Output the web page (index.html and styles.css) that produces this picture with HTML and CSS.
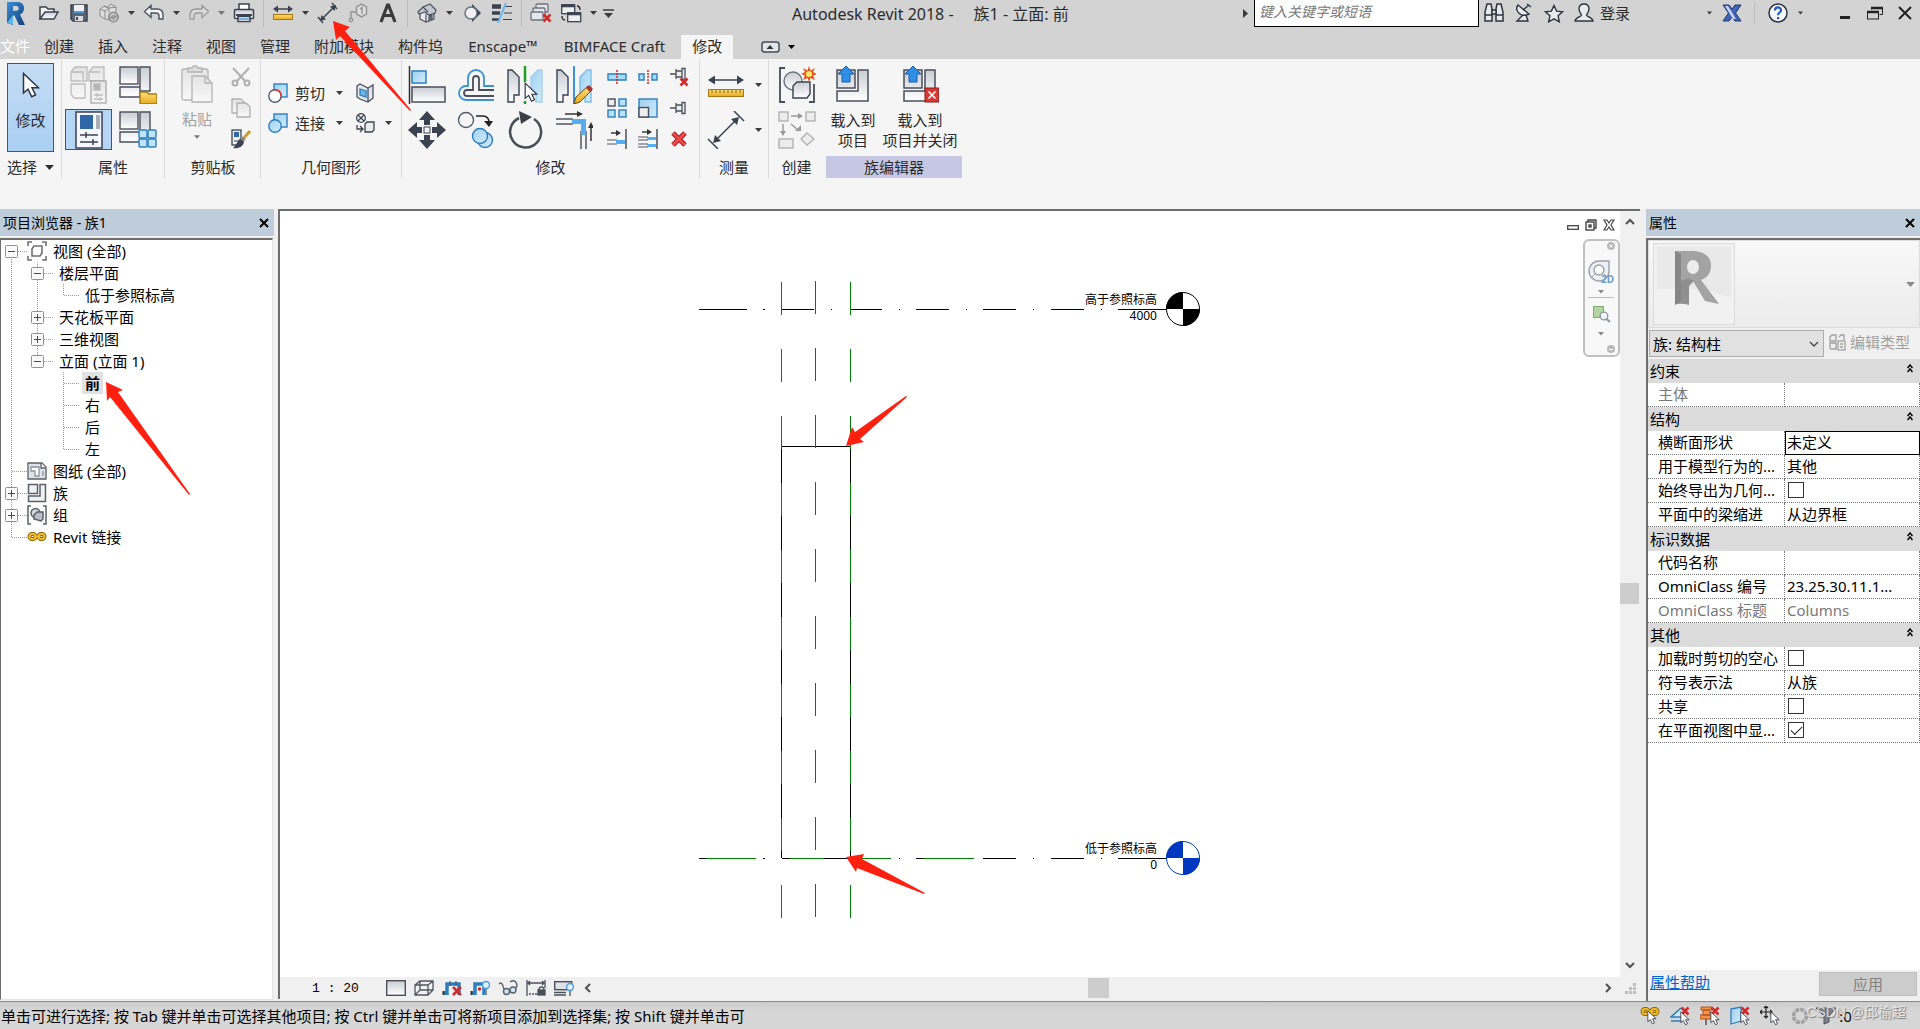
FILE: index.html
```html
<!DOCTYPE html>
<html lang="zh-CN">
<head>
<meta charset="utf-8">
<title>Autodesk Revit 2018 - 族1 - 立面: 前</title>
<link rel="stylesheet" href="styles.css">
</head>
<body>
<svg class="defs" width="0" height="0" aria-hidden="true">
  <defs>
    <linearGradient id="steel" x1="0" y1="0" x2="0" y2="1"><stop offset="0" stop-color="#c9ccd4"/><stop offset="1" stop-color="#ffffff"/></linearGradient>
    <linearGradient id="sky" x1="0" y1="0" x2="1" y2="1"><stop offset="0" stop-color="#9fd0ee"/><stop offset="1" stop-color="#d2ecfb"/></linearGradient>
    <linearGradient id="gold" x1="0" y1="0" x2="0" y2="1"><stop offset="0" stop-color="#ffe07a"/><stop offset="1" stop-color="#e6a91c"/></linearGradient>
    <linearGradient id="logo" x1="0" y1="0" x2="1" y2="1"><stop offset="0" stop-color="#3a8fd8"/><stop offset="1" stop-color="#123f78"/></linearGradient>
    <linearGradient id="pale" x1="0" y1="0" x2="0" y2="1"><stop offset="0" stop-color="#e4e4e4"/><stop offset="1" stop-color="#f8f8f8"/></linearGradient>
    <symbol id="caret" viewBox="0 0 7 4"><path d="M0 0h7L3.500 4z" fill="currentColor"/></symbol>
    <symbol id="cursor" viewBox="0 0 12 18"><path d="M1 1v13l3-2.500 2.500 5 2.500-1.200-2.300-4.800H11z" fill="#fff" stroke="#2d3440" stroke-width="1"/></symbol>
    <symbol id="g-v" viewBox="0 0 26 22"><path d="M10.500 0v22"/></symbol>
    <symbol id="g-t" viewBox="0 0 26 22"><path d="M10.500 0v22M11 11.500h18"/></symbol>
    <symbol id="g-l" viewBox="0 0 26 22"><path d="M10.500 0v11M11 11.500h18"/></symbol>
    <symbol id="g-d" viewBox="0 0 26 22"><path d="M10.500 11v11M11 11.500h15"/></symbol>
    <symbol id="minus" viewBox="0 0 13 13"><rect x=".5" y=".5" width="12" height="12" rx="1" fill="#fafafa" stroke="#919191"/><path d="M3 6.500h7" stroke="#2b4b9b"/></symbol>
    <symbol id="plus" viewBox="0 0 13 13"><rect x=".5" y=".5" width="12" height="12" rx="1" fill="#fafafa" stroke="#919191"/><path d="M3 6.500h7M6.500 3v7" stroke="#2b4b9b"/></symbol>
    <symbol id="chev" viewBox="0 0 6 9"><path d="M.5 4 3 1l2.500 3M.5 8 3 5l2.500 3" fill="none" stroke="#000" stroke-width="1.500"/></symbol>
    <symbol id="x" viewBox="0 0 10 10"><path d="M1 1l8 8M9 1 1 9" stroke="currentColor" stroke-width="2" fill="none"/></symbol>
    <symbol id="redx" viewBox="0 0 10 10"><path d="M1.500 1.500l7 7M8.500 1.500l-7 7" stroke="#d02a2a" stroke-width="2.600" fill="none"/></symbol>
    <symbol id="chain" viewBox="0 0 20 12"><g fill="none" stroke="#8c6508" stroke-width="4"><rect x="2.500" y="3" width="6" height="5" rx="2.500"/><rect x="11.500" y="3" width="6" height="5" rx="2.500"/></g><g fill="none" stroke="#f0bd2a" stroke-width="2"><rect x="2.500" y="3" width="6" height="5" rx="2.500"/><rect x="11.500" y="3" width="6" height="5" rx="2.500"/><path d="M7 5.500h6"/></g></symbol>
  </defs>
</svg>

<header class="top">
  <div class="title-row">
    <div class="qat">
      <button class="logo" aria-label="Revit"><svg width="20" height="24" viewBox="0 0 20 24"><path d="M1 1h10c5 0 7 2.500 7 6.500 0 3-1.500 5-4 6L19 24h-6l-4.500-9.500H7V24l-6-2z" fill="url(#logo)"/><path d="M7 5h3.500c1.500 0 2.200 1 2.200 2.300S12 9.800 10.500 9.800H7z" fill="#d3d3d3"/><path d="M1 22 7 14v9.500z" fill="#57b7e8"/></svg></button>
      <button class="q" aria-label="打开"><svg width="22" height="18" viewBox="0 0 22 18"><path d="M2 15V3h6l2 2h6v3" fill="#f4f4f4" stroke="#3b4250" stroke-width="1.500"/><path d="M2 15 7 8h13l-4 7z" fill="url(#steel)" stroke="#3b4250" stroke-width="1.500"/></svg></button>
      <button class="q" aria-label="保存"><svg width="18" height="18" viewBox="0 0 18 18"><path d="M1 1h16v16H3l-2-2z" fill="#5b6270" stroke="#3b4250" stroke-width="1.500"/><path d="M4 1h10v8H4z" fill="#eef0f3"/><path d="M4 7h10v2H4z" fill="#4d9bd8"/><path d="M5 12h8v5H5z" fill="#d7dade"/><path d="M6 13h2v3H6z" fill="#3b4250"/></svg></button>
      <button class="q" aria-label="同步"><svg width="22" height="20" viewBox="0 0 22 20" stroke="#8b8b8b" fill="#dcdcdc"><path d="M2 6l4-3 3 1.500L13 1l5 3v7l-6 6-5-1-5-3z"/><path d="M2 6l5 2 4-3 7-1M7 8v8M11 5v5M6 3l5 2" fill="none"/><circle cx="15.500" cy="14" r="5" fill="#9c9c9c"/><path d="M12.500 13.500a3 3 0 0 1 5.500-1M18.500 14.500a3 3 0 0 1-5.500 1.500" fill="none" stroke="#e8e8e8"/></svg></button>
      <button class="c" aria-label="同步选项"><svg width="7" height="4"><use href="#caret"/></svg></button>
      <button class="q" aria-label="放弃"><svg width="22" height="18" viewBox="0 0 22 18"><path d="M1.500 7.500 8 1.500V5h6c4 0 6 2.500 6 6v4h-4v-3c0-2-1-3-3-3H8v4.500z" fill="#f3f4f6" stroke="#4a5160" stroke-width="1.400"/></svg></button>
      <button class="c" aria-label="放弃列表"><svg width="7" height="4"><use href="#caret"/></svg></button>
      <button class="q" aria-label="重做"><svg width="22" height="18" viewBox="0 0 22 18"><path d="M20.500 7.500 14 1.500V5H8c-4 0-6 2.500-6 6v4h4v-3c0-2 1-3 3-3h5v4.500z" fill="#dadada" stroke="#9c9c9c" stroke-width="1.400"/></svg></button>
      <button class="c dim" aria-label="重做列表"><svg width="7" height="4"><use href="#caret"/></svg></button>
      <button class="q" aria-label="打印"><svg width="22" height="20" viewBox="0 0 22 20" stroke="#3b4250" stroke-width="1.500"><path d="M6 1h10v6H6z" fill="#fff"/><rect x="1.500" y="6.500" width="19" height="9" rx="1" fill="url(#steel)"/><path d="M3 12h16" stroke-width="2"/><path d="M5 13.500h12v5H5z" fill="#fff"/><path d="M6 16h10" stroke="#4d9bd8"/></svg></button>
      <i class="sep"></i>
      <button class="q" aria-label="测量"><svg width="22" height="18" viewBox="0 0 22 18"><path d="M3 5h16" stroke="#3b4250" stroke-width="1.500"/><path d="M1 5l5-3.500v7zM21 5l-5-3.500v7z" fill="#3b4250"/><rect x="1.500" y="10.500" width="19" height="5" fill="url(#gold)" stroke="#a77912"/></svg></button>
      <button class="c" aria-label="测量选项"><svg width="7" height="4"><use href="#caret"/></svg></button>
      <button class="q" aria-label="对齐尺寸标注"><svg width="22" height="22" viewBox="0 0 22 22"><path d="M6 16 16 6M1 15l5 6M15 1l5 6" stroke="#3b4250" stroke-width="1.500" fill="none"/><path d="M3 19l1.500-6 4.500 4.500zM19 3l-6 1.500 4.500 4.500z" fill="#3b4250"/></svg></button>
      <button class="q" aria-label="按类别标记"><svg width="20" height="20" viewBox="0 0 20 20" fill="none" stroke="#969696" stroke-width="1.500"><path d="M8.500 4 13.500 1l5 3v7l-5 3-5-3z" fill="#dedede"/><path d="M12 6l2-1.500V11M3 15V9h5.500"/><circle cx="3" cy="17" r="1.700"/></svg></button>
      <button class="q" aria-label="文字"><svg width="18" height="20" viewBox="0 0 18 20"><path d="M2 19 8.500 2h1L16 19M5 12.500h8" fill="none" stroke="#3a3a3a" stroke-width="3.200"/></svg></button>
      <i class="sep"></i>
      <button class="q" aria-label="默认三维视图"><svg width="20" height="20" viewBox="0 0 20 20" stroke="#4a5160" stroke-width="1.200"><path d="M3 9v7l6 3 8-3V8" fill="#e7e9ec"/><path d="M1 9 6 4l7-3 6 6-1 3-6 2-4-3-6 2z" fill="#c4c8cf"/><path d="M6 4l5 5" fill="none"/><path d="M9 19v-8M12 18v-5l3-1v5" fill="#6b7280"/></svg></button>
      <button class="c" aria-label="三维视图选项"><svg width="7" height="4"><use href="#caret"/></svg></button>
      <button class="q" aria-label="剖面"><svg width="20" height="20" viewBox="0 0 20 20"><path d="M10 1v18l9-9z" fill="#3b4250"/><circle cx="9" cy="10" r="6" fill="#f0f1f3" stroke="#6b7280" stroke-width="1.500"/></svg></button>
      <button class="q" aria-label="细线"><svg width="22" height="20" viewBox="0 0 22 20" fill="none" stroke="#3b4250"><path d="M1 3.500h9" stroke-width="4.500"/><path d="M1 10h8" stroke-width="3.500"/><path d="M1 16.500h7" stroke-width="2.500"/><path d="M14 3.500h7M13 10h8M12 16.500h9" stroke-width="1"/><path d="M15 0 7 20" stroke="#6bb6ee" stroke-width="2"/></svg></button>
      <i class="sep"></i>
      <button class="q" aria-label="关闭隐藏窗口"><svg width="22" height="20" viewBox="0 0 22 20" fill="#e5e6e9" stroke="#6b7280" stroke-width="1.300"><rect x="6" y="1" width="12" height="8" rx="1"/><rect x="3" y="5" width="12" height="8" rx="1"/><rect x="1" y="9" width="12" height="8" rx="1"/><svg x="12" y="10" width="10" height="10"><use href="#redx"/></svg></svg></button>
      <button class="q" aria-label="切换窗口"><svg width="22" height="20" viewBox="0 0 22 20"><rect x="1.700" y="1.700" width="13" height="9" fill="#eee" stroke="#3b4250" stroke-width="1.300"/><path d="M1 3h14" stroke="#3b4250" stroke-width="2.500"/><rect x="7.700" y="9.700" width="13" height="9" fill="#eee" stroke="#3b4250" stroke-width="1.300"/><path d="M7 11h14" stroke="#3b4250" stroke-width="2.500"/><path d="M17 3c2 0 3 1 3 4M5 17c-2 0-3-1-3-4" fill="none" stroke="#222" stroke-width="1.300"/></svg></button>
      <button class="c" aria-label="窗口列表"><svg width="7" height="4"><use href="#caret"/></svg></button>
      <button class="c" aria-label="自定义快速访问工具栏"><svg width="11" height="9" viewBox="0 0 11 9"><path d="M0 1h11" stroke="#3b3b3b" stroke-width="1.500"/><path d="M1 4h9L5.500 9z" fill="#3b3b3b"/></svg></button>
    </div>
    <h1 class="title"><span>Autodesk Revit 2018 -</span><span>族1 - 立面: 前</span></h1>
    <div class="info">
      <svg class="tri" width="5" height="9" viewBox="0 0 5 9"><path d="M0 0l5 4.500L0 9z" fill="#3b3b3b"/></svg>
      <input class="search" type="text" aria-label="搜索" placeholder="键入关键字或短语">
      <button class="q" aria-label="查找"><svg width="20" height="20" viewBox="0 0 20 20" fill="#e9eaec" stroke="#2d3440" stroke-width="1.500"><path d="M3 1h4l1 5v12H1V9z"/><path d="M17 1h-4l-1 5v12h7V9z"/><path d="M8 7h4v4H8zM1 12h7M12 12h7"/></svg></button>
      <button class="q" aria-label="通讯中心"><svg width="18" height="20" viewBox="0 0 18 20" fill="#e9eaec" stroke="#2d3440" stroke-width="1.400"><path d="M8 12l-6 6h11l-2-6z"/><path d="M3 2c-4 6 3 13 11 9z"/><path d="M8 7l6-5M12 1l4 3"/></svg></button>
      <button class="q" aria-label="收藏夹"><svg width="20" height="19" viewBox="0 0 20 19"><path d="M10 1.500l2.600 5.600 6 .7-4.500 4 1.200 6L10 14.900l-5.300 2.900 1.200-6-4.500-4 6-.7z" fill="#e9eaec" stroke="#2d3440" stroke-width="1.400"/></svg></button>
      <button class="q" aria-label="用户"><svg width="20" height="20" viewBox="0 0 20 20" fill="#e9eaec" stroke="#2d3440" stroke-width="1.400"><path d="M10 1c3 0 5 2 5 5s-1.500 4-2.500 6c0 2 6 2 6.500 6H1c.5-4 6.500-4 6.500-6C6.500 10 5 9 5 6s2-5 5-5z"/></svg></button>
      <button class="login">登录</button>
      <button class="c" aria-label="登录选项"><svg width="5" height="4"><use href="#caret"/></svg></button>
      <button class="q" aria-label="应用商店"><svg width="20" height="18" viewBox="0 0 20 18"><path d="M1 1h6l3 4 3-4h6l-5.500 8 5.500 8h-6l-3-4-3 4H1l5.500-8z" fill="#4264b8" stroke="#20376f"/><path d="M3 2h3l8 13h-3z" fill="#c9d5f0"/></svg></button>
      <i class="sep wide"></i>
      <button class="q" aria-label="帮助"><svg width="20" height="20" viewBox="0 0 20 20"><circle cx="10" cy="10" r="9" fill="#f5f7fb" stroke="#2d3440" stroke-width="1.500"/><path d="M7 7.500c0-4 6-4 6-.3 0 2.300-3 2.300-3 5" fill="none" stroke="#2457b8" stroke-width="2.200"/><rect x="9" y="14" width="2.200" height="2.200" fill="#2457b8"/></svg></button>
      <button class="c" aria-label="帮助选项"><svg width="5" height="4"><use href="#caret"/></svg></button>
      <span class="win">
        <button class="q" aria-label="最小化"><svg width="14" height="14" viewBox="0 0 14 14"><path d="M2 11.500h10" stroke="#222" stroke-width="3"/></svg></button>
        <button class="q" aria-label="还原"><svg width="16" height="14" viewBox="0 0 16 14" fill="none" stroke="#222"><path d="M4.500 3.500v-2h11v7h-3" /><path d="M4 2h12" stroke-width="2.500"/><rect x=".5" y="5.500" width="11" height="7.500"/><path d="M0 6h12" stroke-width="2.500"/></svg></button>
        <button class="q" aria-label="关闭"><svg width="14" height="14" viewBox="0 0 14 14"><path d="M1 1l12 12M13 1 1 13" stroke="#222" stroke-width="2"/></svg></button>
      </span>
    </div>
  </div>
  <nav class="tabs">
    <a class="tab file" href="#">文件</a><a class="tab" href="#">创建</a><a class="tab" href="#">插入</a><a class="tab" href="#">注释</a><a class="tab" href="#">视图</a><a class="tab" href="#">管理</a><a class="tab" href="#">附加模块</a><a class="tab" href="#">构件坞</a><a class="tab addin" href="#">Enscape™</a><a class="tab addin" href="#">BIMFACE Craft</a><a class="tab active" href="#">修改</a>
    <button class="collapse" aria-label="最小化功能区"><svg width="19" height="12" viewBox="0 0 19 12"><rect x="1" y="1" width="17" height="10" rx="2.500" fill="#e4e6ea" stroke="#454c59" stroke-width="1.500"/><path d="M5.500 8h7L9 4z" fill="#333"/></svg><svg width="7" height="4"><use href="#caret"/></svg></button>
  </nav>
</header>

<section class="ribbon">
  <div class="panel p-select">
    <div class="body"><button class="modify"><svg width="18" height="27"><use href="#cursor"/></svg>修改</button></div>
    <div class="cap">选择<svg width="9" height="5"><use href="#caret"/></svg></div>
  </div>
  <div class="panel">
    <div class="body"><div class="big two">
      <button aria-label="类型属性"><svg width="38" height="38" viewBox="0 0 38 38" fill="url(#pale)" stroke="#bcbcbc" stroke-width="1.300"><path d="M1 6l4-5h12v14H1zM19 6l4-5h11v14H19zM1 18h14v14H4l-3-4z"/><path d="M1 6h12v10M19 6h11"/><rect x="21" y="15" width="15" height="22" stroke="#a9a9a9"/><path d="M24 18h6v6h-6z" fill="#b5b5b5"/><path d="M24 29h9M24 33h9M27 27v4M30 31v4"/></svg></button>
      <button aria-label="族类别"><svg width="38" height="38" viewBox="0 0 38 38" fill="url(#steel)" stroke="#4a4f5a" stroke-width="1.400"><rect x="1" y="1" width="18" height="17"/><path d="M21 1h10v24H21zM1 21h20v10H1z"/><path d="M21 26h7l2 2h8v10H21z" fill="url(#gold)" stroke="#a77912"/></svg></button>
      <button class="on" aria-label="属性"><svg width="28" height="38" viewBox="0 0 28 38"><rect x="1" y="1" width="26" height="36" fill="#f5f7fa" stroke="#3b4250" stroke-width="1.500"/><rect x="5" y="4" width="13" height="14" fill="#2f66a6"/><rect x="21" y="4" width="4" height="14" fill="#a9afb9"/><path d="M5 24h18M5 31h18M11 21v6M18 28v6" stroke="#3b4250" stroke-width="1.500"/></svg></button>
      <button aria-label="族类型"><svg width="38" height="38" viewBox="0 0 38 38" fill="url(#steel)" stroke="#4a4f5a" stroke-width="1.400"><rect x="1" y="1" width="18" height="17"/><path d="M21 1h10v24H21zM1 21h20v10H1z"/><g fill="#bfe4fa" stroke="#2c7fbe"><rect x="20" y="19" width="8" height="8" rx="1"/><rect x="29" y="19" width="8" height="8" rx="1"/><rect x="20" y="28" width="8" height="8" rx="1"/><rect x="29" y="28" width="8" height="8" rx="1"/></g></svg></button>
    </div></div>
    <div class="cap">属性</div>
  </div>
  <div class="panel clip">
    <div class="body">
      <button class="paste"><svg width="32" height="38" viewBox="0 0 32 38" fill="url(#pale)" stroke="#b4b4b4" stroke-width="1.300"><rect x="1" y="4" width="26" height="31" rx="2"/><path d="M7 7V3h4c1-3 5-3 6 0h4v4z" fill="#ddd"/><path d="M11 11h13l7 7v19H11z"/><path d="M24 11v7h7" fill="none"/></svg>粘贴<svg class="gc" width="6" height="4"><use href="#caret"/></svg></button>
      <div class="small one">
        <button aria-label="剪切"><svg width="20" height="20" viewBox="0 0 20 20" fill="none" stroke="#b0b0b0" stroke-width="2"><path d="M2 1l12 13M18 1 6 14"/><circle cx="4" cy="16" r="2.500"/><circle cx="16" cy="16" r="2.500"/></svg></button>
        <button aria-label="复制到剪贴板"><svg width="20" height="20" viewBox="0 0 20 20" fill="url(#pale)" stroke="#b0b0b0" stroke-width="1.300"><path d="M1 1h9l3 3v11H1z"/><path d="M6 5h9l4 4v10H6z"/></svg></button>
        <button aria-label="匹配类型属性"><svg width="20" height="20" viewBox="0 0 20 20"><rect x="1" y="1" width="9" height="15" fill="#eef0f3" stroke="#3b4250" stroke-width="1.300"/><path d="M3 3h5v5H3z" fill="#2f66a6"/><path d="M3 12h5" stroke="#3b4250"/><path d="M19 2 11 11" stroke="#c79a3b" stroke-width="3"/><path d="M13 9 10 13" stroke="#888" stroke-width="4"/><path d="M9 10c-3 2-3 6-7 9 5 1 10-1 11-6z" fill="#3b4250"/></svg></button>
      </div>
    </div>
    <div class="cap">剪贴板</div>
  </div>
  <div class="panel">
    <div class="body geo">
      <div class="row">
        <button><svg width="20" height="20" viewBox="0 0 20 20"><rect x="6" y="1" width="13" height="13" fill="url(#sky)" stroke="#2c7fbe" stroke-width="1.400"/><circle cx="7" cy="13" r="6.200" fill="#fff" stroke="#555c68" stroke-width="1.400"/><path d="M6 6.800A6.200 6.200 0 0 1 13.200 14" fill="none" stroke="#e33" stroke-width="1.500"/></svg>剪切</button>
        <button class="c" aria-label="剪切选项"><svg width="7" height="4"><use href="#caret"/></svg></button>
        <button aria-label="填色"><svg width="20" height="20" viewBox="0 0 20 20" stroke="#4a5160" stroke-width="1.300" fill="#e3e6ea"><path d="M2 3l3-2 8 4 5-3v13l-5 4-8-3-3-2z"/><path d="M13 5v14"/><path d="M5 6l6 2v6l-6-2z" fill="#6fb6ea" stroke="#2c7fbe"/></svg></button>
      </div>
      <div class="row">
        <button><svg width="20" height="20" viewBox="0 0 20 20" fill="url(#sky)" stroke="#2c7fbe" stroke-width="1.400"><rect x="6" y="1" width="13" height="13"/><circle cx="7" cy="13" r="6.200"/></svg>连接</button>
        <button class="c" aria-label="连接选项"><svg width="7" height="4"><use href="#caret"/></svg></button>
        <button aria-label="拆分面"><svg width="20" height="20" viewBox="0 0 20 20" stroke="#3b4250" stroke-width="1.300" fill="none"><circle cx="6" cy="5" r="4.300"/><path d="M3 2l6 6M9 2 3 8M2 12v4h5M5 13l3 3-3 3"/><path d="M10 11l2-2h7v8l-2 2h-7z" fill="#e9eaec"/></svg></button>
        <button class="c" aria-label="更多"><svg width="7" height="4"><use href="#caret"/></svg></button>
      </div>
    </div>
    <div class="cap">几何图形</div>
  </div>
  <div class="panel">
    <div class="body">
      <div class="big four">
        <button aria-label="对齐"><svg width="38" height="38" viewBox="0 0 38 38"><path d="M1.500 0v38" stroke="#2d2f33" stroke-width="1.500"/><rect x="4" y="5" width="14" height="12" fill="url(#sky)" stroke="#2c7fbe" stroke-width="1.500"/><rect x="4" y="21" width="33" height="15" fill="url(#steel)" stroke="#4a4f5a" stroke-width="1.500"/></svg></button>
        <button aria-label="偏移"><svg width="38" height="38" viewBox="0 0 38 38" fill="none"><path d="M37 20h-10V12a8 8 0 0 0-16 0v8H9a7 7 0 0 0 0 14h28" stroke="#3d93d2" stroke-width="1.800"/><path d="M37 24H22V13a3 3 0 0 0-6 0v11H10a3 3 0 0 0 0 6h27" stroke="#4a4f5a" stroke-width="1.800"/></svg></button>
        <button aria-label="镜像 - 拾取轴"><svg width="38" height="38" viewBox="0 0 38 38"><path d="M2 4h4l7 7v18H8v7H2z" fill="url(#steel)" stroke="#3b4250" stroke-width="1.400"/><path d="M36 4h-4l-7 7v18h5v7h6z" fill="url(#sky)" stroke="#a4cfe9" stroke-width="1.400"/><path d="M19 0v16M19 35v3" stroke="#23a023" stroke-width="2.500"/><svg x="18" y="16" width="14" height="21"><use href="#cursor"/></svg></svg></button>
        <button aria-label="镜像 - 绘制轴"><svg width="38" height="38" viewBox="0 0 38 38"><path d="M2 4h4l7 7v18H8v7H2z" fill="url(#steel)" stroke="#3b4250" stroke-width="1.400"/><path d="M36 4h-4l-7 7v18h5v7h6z" fill="url(#sky)" stroke="#7fbde6" stroke-width="1.400"/><path d="M19 0v38" stroke="#3d93d2" stroke-width="2"/><path d="M19 38l2-7 12-11 4 4-12 12z" fill="url(#gold)" stroke="#6b4a10"/><path d="M31 22l3-3 4 4-3 3z" fill="#a33" /></svg></button>
        <button aria-label="移动"><svg width="38" height="38" viewBox="0 0 38 38" fill="#3b4250"><path d="M19 0l8 9h-5v5h-6V9h-5zM19 38l8-9h-5v-5h-6v5h-5zM0 19l9-8v5h5v6H9v5zM38 19l-9-8v5h-5v6h5v5z"/><rect x="16" y="16" width="6" height="6" fill="#f5f5f5" stroke="#3b4250"/></svg></button>
        <button aria-label="复制"><svg width="38" height="38" viewBox="0 0 38 38"><circle cx="9" cy="9" r="7.500" fill="#f5f5f5" stroke="#555c68" stroke-width="1.400"/><path d="M19 5h7c4 0 6 2 6 7" fill="none" stroke="#222" stroke-width="1.500"/><path d="M27 10h9l-4 6z" fill="#222"/><g fill="url(#sky)" stroke="#2c7fbe" stroke-width="1.400"><circle cx="28" cy="29" r="7.500"/><circle cx="23" cy="25" r="7.500"/></g></svg></button>
        <button aria-label="旋转"><svg width="38" height="38" viewBox="0 0 38 38"><path d="M13 7A15.500 15.500 0 1 0 28 8" fill="none" stroke="#484c54" stroke-width="2.500"/><path d="M13 0l13 6-11 7z" fill="#3b3f46"/></svg></button>
        <button aria-label="修剪/延伸为角"><svg width="38" height="38" viewBox="0 0 38 38" fill="none"><path d="M10 3h13" stroke="#333" stroke-width="1.500"/><path d="M22 0l6 3-6 3z" fill="#333"/><path d="M1 8h17M1 13h17M26 20v18M31 20v18" stroke="#50555f" stroke-width="1.500"/><path d="M17 10.500h11.500V24" stroke="#56aef0" stroke-width="5"/><path d="M36 30V16" stroke="#333" stroke-width="1.500"/><path d="M33 17l3-6 3 6z" fill="#333"/></svg></button>
      </div>
      <div class="small three">
        <button aria-label="拆分图元"><svg width="20" height="18" viewBox="0 0 20 18"><path d="M1 6h18v6H1z" fill="#a9dcf8" stroke="#2c7fbe" stroke-width="1.400"/><path d="M10 2v14" stroke="#d22" stroke-width="1.500" stroke-dasharray="2 1"/></svg></button>
        <button aria-label="用间隙拆分"><svg width="20" height="18" viewBox="0 0 20 18"><path d="M1 6h5v6H1zM14 6h5v6h-5z" fill="#a9dcf8" stroke="#2c7fbe" stroke-width="1.400"/><path d="M10 2v14" stroke="#d22" stroke-width="1.500" stroke-dasharray="2 1"/></svg></button>
        <button aria-label="解锁"><svg width="20" height="20" viewBox="0 0 20 20"><path d="M1 7h6M7 2v10M7 4h6v6H7M13 1.500h3v11h-3z" fill="#eee" stroke="#4a4f5a" stroke-width="1.300"/><svg x="10" y="10" width="10" height="10"><use href="#redx"/></svg></svg></button>
        <button aria-label="阵列"><svg width="20" height="20" viewBox="0 0 20 20" stroke-width="1.400"><rect x="1" y="1" width="7" height="7" fill="#eee" stroke="#4a4f5a"/><g fill="#b8e2f8" stroke="#2c7fbe"><rect x="12" y="1" width="7" height="7"/><rect x="1" y="12" width="7" height="7"/><rect x="12" y="12" width="7" height="7"/></g></svg></button>
        <button aria-label="缩放"><svg width="20" height="20" viewBox="0 0 20 20" stroke-width="1.400"><rect x="1" y="1" width="18" height="18" fill="url(#sky)" stroke="#2c7fbe"/><rect x="1" y="9.500" width="9.500" height="9.500" fill="#eee" stroke="#4a4f5a"/></svg></button>
        <button aria-label="锁定"><svg width="20" height="16" viewBox="0 0 20 16"><path d="M1 8h6M7 3v10M7 5h6v6H7M13 2.500h3v11h-3z" fill="#eee" stroke="#4a4f5a" stroke-width="1.300"/></svg></button>
        <button aria-label="修剪/延伸单个图元"><svg width="20" height="20" viewBox="0 0 20 20"><path d="M19 0v20" stroke="#4a4f5a" stroke-width="1.500"/><path d="M4 4h6" stroke="#333" stroke-width="1.400"/><path d="M9 1l5 3-5 3z" fill="#333"/><path d="M0 11h10M0 15h10" stroke="#50555f"/><path d="M9 13h9" stroke="#56aef0" stroke-width="4"/></svg></button>
        <button aria-label="修剪/延伸多个图元"><svg width="20" height="20" viewBox="0 0 20 20"><path d="M19 0v20" stroke="#4a4f5a" stroke-width="1.500"/><path d="M4 3h6" stroke="#333" stroke-width="1.400"/><path d="M9 0l5 3-5 3z" fill="#333"/><path d="M0 8h10M0 11h10M0 15h10M0 18h10" stroke="#50555f"/><path d="M9 9.500h9M9 16.500h9" stroke="#56aef0" stroke-width="3"/></svg></button>
        <button aria-label="删除"><svg width="18" height="18" viewBox="0 0 18 18"><path d="M3 3l12 12M15 3 3 15" stroke="#a61e1e" stroke-width="5"/><path d="M3 3l12 12M15 3 3 15" stroke="#ef4b4b" stroke-width="3"/></svg></button>
      </div>
    </div>
    <div class="cap">修改</div>
  </div>
  <div class="panel">
    <div class="body"><div class="big pair">
      <button aria-label="测量两个参照"><svg width="38" height="38" viewBox="0 0 38 38"><path d="M5 14h28" stroke="#3b4250" stroke-width="1.500"/><path d="M1 14l7-4.500v9zM37 14l-7-4.500v9z" fill="#3b4250"/><rect x="1.500" y="23.500" width="35" height="7" fill="url(#gold)" stroke="#a77912"/><path d="M5 24v3M9 24v3M13 24v3M17 24v3M21 24v3M25 24v3M29 24v3M33 24v3" stroke="#8a6410"/></svg></button>
      <button class="c" aria-label="测量选项"><svg width="7" height="4"><use href="#caret"/></svg></button>
      <button aria-label="尺寸标注"><svg width="38" height="38" viewBox="0 0 38 38"><path d="M8 30 30 8M1 28l10 10M27 0l10 10" stroke="#3b4250" stroke-width="1.500"/><path d="M6 32l2-8 6 6zM32 6l-8 2 6 6z" fill="#3b4250"/></svg></button>
      <button class="c" aria-label="尺寸标注选项"><svg width="7" height="4"><use href="#caret"/></svg></button>
    </div></div>
    <div class="cap">测量</div>
  </div>
  <div class="panel last create">
    <div class="body"><div class="big">
      <button aria-label="创建组"><svg width="38" height="38" viewBox="0 0 38 38"><path d="M7 2H2v34h5M31 36h5V18" fill="none" stroke="#4a4f5a" stroke-width="1.800"/><circle cx="15" cy="15" r="9" fill="url(#steel)" stroke="#6b7280" stroke-width="1.400"/><path d="M15 20l4-4h13v12l-3 4H15z" fill="url(#steel)" stroke="#3b4250" stroke-width="1.400"/><path d="M31 0l1.500 4.500L37 2l-2 4 4 2-4 1.500 2 4.500-4.500-2L31 16l-1.500-4L25 14l2-4.500L23 8l4-2-2-4 4.500 2.500z" fill="#e2541b"/><circle cx="31" cy="8" r="3" fill="#ffe86b"/></svg></button>
      <button aria-label="创建类似实例"><svg width="38" height="38" viewBox="0 0 38 38" fill="#ececec" stroke="#b3b3b3" stroke-width="1.400"><rect x="1" y="1" width="9" height="9"/><rect x="28" y="1" width="9" height="9"/><rect x="1" y="28" width="14" height="9"/><path d="M29 22l7 6-7 6-6-6z"/><path d="M13 5h8M5 13v8M13 13l8 7" stroke="#999"/><path d="M20 2l5 3-5 3zM2 20l3 5 3-5zM17 20h6v-6z" fill="#999" stroke="none"/></svg></button>
    </div></div>
    <div class="cap">创建</div>
  </div>
  <div class="panel last editor">
    <div class="body">
      <button class="load"><svg width="38" height="38" viewBox="0 0 38 38"><path d="M3 5h18v18H3zM24 5h10v31H3V26h21z" fill="url(#steel)" stroke="#4a4f5a" stroke-width="1.500"/><path d="M12 1l8 8h-4v8H8V9H4z" fill="#2f8fe6" stroke="#1b5fa8"/></svg><span>载入到</span><span>项目</span></button>
      <button class="load wide"><svg width="38" height="38" viewBox="0 0 38 38"><path d="M3 5h18v18H3zM24 5h10v31H3V26h21z" fill="url(#steel)" stroke="#4a4f5a" stroke-width="1.500"/><path d="M12 1l8 8h-4v8H8V9H4z" fill="#2f8fe6" stroke="#1b5fa8"/><rect x="24" y="23" width="14" height="14" fill="#d53a34" stroke="#8f1a16"/><path d="M27.500 26.500l7 7M34.500 26.500l-7 7" stroke="#fff" stroke-width="1.600"/></svg><span>载入到</span><span>项目并关闭</span></button>
    </div>
    <div class="cap">族编辑器</div>
  </div>
</section>

<main class="work">
  <aside class="browser">
    <div class="dock-title"><span>项目浏览器 - 族1</span><button aria-label="关闭"><svg width="10" height="10"><use href="#x"/></svg></button></div>
    <ul class="tree">
      <li><span class="g"><svg><use href="#g-d"/></svg><button aria-label="折叠"><svg><use href="#minus"/></svg></button></span><svg class="ti" viewBox="0 0 20 20" fill="none" stroke="#6d7077" stroke-width="1.600"><path d="M5 1H1v4M15 1h4v4M5 19H1v-4M15 19h4v-4"/><path d="M5 8l2-3h8v7l-2 3H5z" fill="#fff"/></svg><span class="t">视图 (全部)</span></li>
      <li><span class="g"><svg><use href="#g-v"/></svg></span><span class="g"><svg><use href="#g-t"/></svg><button aria-label="折叠"><svg><use href="#minus"/></svg></button></span><span class="t in">楼层平面</span></li>
      <li><span class="g"><svg><use href="#g-v"/></svg></span><span class="g"><svg><use href="#g-v"/></svg></span><span class="g"><svg><use href="#g-l"/></svg></span><span class="t in">低于参照标高</span></li>
      <li><span class="g"><svg><use href="#g-v"/></svg></span><span class="g"><svg><use href="#g-t"/></svg><button aria-label="展开"><svg><use href="#plus"/></svg></button></span><span class="t in">天花板平面</span></li>
      <li><span class="g"><svg><use href="#g-v"/></svg></span><span class="g"><svg><use href="#g-t"/></svg><button aria-label="展开"><svg><use href="#plus"/></svg></button></span><span class="t in">三维视图</span></li>
      <li><span class="g"><svg><use href="#g-v"/></svg></span><span class="g"><svg><use href="#g-l"/></svg><button aria-label="折叠"><svg><use href="#minus"/></svg></button></span><span class="t in">立面 (立面 1)</span></li>
      <li><span class="g"><svg><use href="#g-v"/></svg></span><span class="g"></span><span class="g"><svg><use href="#g-t"/></svg></span><span class="t in cur">前</span></li>
      <li><span class="g"><svg><use href="#g-v"/></svg></span><span class="g"></span><span class="g"><svg><use href="#g-t"/></svg></span><span class="t in">右</span></li>
      <li><span class="g"><svg><use href="#g-v"/></svg></span><span class="g"></span><span class="g"><svg><use href="#g-t"/></svg></span><span class="t in">后</span></li>
      <li><span class="g"><svg><use href="#g-v"/></svg></span><span class="g"></span><span class="g"><svg><use href="#g-l"/></svg></span><span class="t in">左</span></li>
      <li><span class="g"><svg><use href="#g-t"/></svg></span><svg class="ti" viewBox="0 0 20 20" fill="#dfe2e6" stroke="#5a6068" stroke-width="1.300"><path d="M1 2h14l4 4v12H1z"/><path d="M14 2v5h5" fill="#fff"/><path d="M4 6h8v9H8v-5H4zM16 10v5" fill="#fff" stroke="#8a94a0"/></svg><span class="t">图纸 (全部)</span></li>
      <li><span class="g"><svg><use href="#g-t"/></svg><button aria-label="展开"><svg><use href="#plus"/></svg></button></span><svg class="ti" viewBox="0 0 20 20" fill="#f0f1f3" stroke="#5a6068" stroke-width="1.500"><rect x="1.500" y="1.500" width="9" height="9"/><path d="M13 1.500h5.500v17h-17V13H13z"/></svg><span class="t">族</span></li>
      <li><span class="g"><svg><use href="#g-t"/></svg><button aria-label="展开"><svg><use href="#plus"/></svg></button></span><svg class="ti" viewBox="0 0 20 20" fill="none" stroke="#5a6068" stroke-width="1.500"><path d="M4 1H1v18h3M16 1h3v18h-3"/><circle cx="8.500" cy="8" r="4.500" fill="#d5d9df"/><path d="M7 10l3-3h6v7l-2 2-7-2z" fill="#b9bec7"/></svg><span class="t">组</span></li>
      <li><span class="g"><svg><use href="#g-l"/></svg></span><svg class="ti" viewBox="0 -4 20 20"><use href="#chain" width="20" height="12"/></svg><span class="t">Revit 链接</span></li>
    </ul>
  </aside>

  <section class="view">
    <div class="canvas">
      <svg class="drawing" role="img" aria-label="立面: 前">
        <g transform="translate(-280 -211)" shape-rendering="crispEdges" fill="none" stroke-width="1">
          <g stroke="#000">
            <path d="M699 309.500h48M763 309.500h2M782 309.500h32M831 309.500h1M850 309.500h32M899 309.500h1M916 309.500h33M966 309.500h1M983 309.500h33M1033 309.500h1M1051 309.500h33M1101 309.500h1M1118 309.500h48"/>
            <path d="M781.500 858V446.500h69V858.500h-69"/>
            <path d="M699 858.500h7M763 858.500h2M899 858.500h1M916 858.500h8M983 858.500h33M1033 858.500h1M1051 858.500h33M1101 858.500h1M1118 858.500h48"/>
          </g>
          <g stroke="#008000">
            <path d="M781.500 282V919M850.500 282V919" stroke-dasharray="33 34"/>
            <path d="M815.500 281V918" stroke-dasharray="33 34"/>
            <path d="M706 858.500h50M790 858.500h34M862 858.500h29M924 858.500h50"/>
          </g>
          <g shape-rendering="auto">
            <circle cx="1183" cy="309" r="16.500" fill="#fff" stroke="#000"/>
            <path d="M1183 309v-17a17 17 0 0 0-17 17zM1183 309v17a17 17 0 0 0 17-17z" fill="#000"/>
            <circle cx="1183" cy="858" r="16.500" fill="#fff" stroke="#0038c0"/>
            <path d="M1183 858v-17a17 17 0 0 0-17 17zM1183 858v17a17 17 0 0 0 17-17z" fill="#0038c0"/>
            <path d="M846 446l18-4-4-3 47-42-1-1-51 36-3-5z" fill="#ff2010"/>
            <path d="M846 857l18-3-2 5 63 34-1 1-67-26-1 4z" fill="#ff2010"/>
          </g>
          <g class="level" text-anchor="end">
            <text x="1157" y="304">高于参照标高</text><text x="1157" y="320">4000</text>
            <text x="1157" y="853">低于参照标高</text><text x="1157" y="869">0</text>
          </g>
        </g>
      </svg>
      <div class="overlay">
        <div class="mdi">
          <button aria-label="最小化"><svg width="12" height="12" viewBox="0 0 12 12"><rect x=".7" y="6.700" width="10.600" height="3.600" fill="#fff" stroke="#444" stroke-width="1.300"/></svg></button>
          <button aria-label="还原"><svg width="12" height="12" viewBox="0 0 12 12" fill="none" stroke="#444" stroke-width="1.400"><path d="M3 3V1h8v8H9"/><rect x="1" y="3" width="8" height="8"/><rect x="4" y="6" width="2" height="2"/></svg></button>
          <button aria-label="关闭"><svg width="12" height="12" viewBox="0 0 12 12" fill="#fff" stroke="#444" stroke-width="1.200"><path d="M1 1h3l2 3 2-3h3L8 6l3 5H8L6 8l-2 3H1l3-5z"/></svg></button>
        </div>
        <div class="navbar">
          <svg width="33" height="114" viewBox="0 0 33 114">
            <circle cx="26" cy="5" r="4" fill="#b9b9b9"/><path d="M24.500 3.500l3 3M27.500 3.500l-3 3" stroke="#fff"/>
            <path d="M14 20h10v10a10 10 0 1 1-10-10z" fill="#eef0f4" stroke="#9aa1ad" stroke-width="1.400"/><circle cx="14" cy="29" r="5" fill="#fff" stroke="#9aa1ad" stroke-width="1.400"/><path d="M6 37l4-4M19 33l3 3" stroke="#9aa1ad"/>
            <text x="16" y="42" class="nav2d">2D</text>
            <path d="M13 49h6l-3 3.500z" fill="#888"/><path d="M3 56.500h26" stroke="#bbb"/>
            <rect x="8.500" y="65.500" width="10" height="11" fill="#b5d5a5" stroke="#7eae6c"/><circle cx="19" cy="75" r="3.800" fill="#eef4f8" stroke="#8b949e" stroke-width="1.300"/><path d="M21.500 78l3.500 3" stroke="#8b949e" stroke-width="2"/>
            <path d="M13 91h6l-3 3.500z" fill="#888"/>
            <circle cx="26" cy="108" r="4" fill="#b9b9b9"/><path d="M24 108.500h4" stroke="#fff"/>
          </svg>
        </div>
      </div>
    </div>
    <div class="vscroll"><svg width="10" height="7" viewBox="0 0 10 7"><path d="M1 6l4-4 4 4" fill="none" stroke="#505050" stroke-width="2"/></svg><i></i><svg width="10" height="7" viewBox="0 0 10 7"><path d="M1 1l4 4 4-4" fill="none" stroke="#505050" stroke-width="2"/></svg></div>
    <div class="viewbar">
      <button class="scale">1 : 20</button>
      <button aria-label="详细程度"><svg width="20" height="16" viewBox="0 0 20 16"><rect x=".7" y=".7" width="18.600" height="14.600" fill="url(#steel)" stroke="#4a4f5a" stroke-width="1.400"/></svg></button>
      <button aria-label="视觉样式"><svg width="20" height="16" viewBox="0 0 20 16" fill="none" stroke="#50555f" stroke-width="1.300"><path d="M1 5h13v10H1zM1 5l5-4h13v9l-5 5M14 5l5-4M6 1v9h13M6 10l-5 5"/></svg></button>
      <button aria-label="裁剪视图"><svg width="20" height="16" viewBox="0 0 20 16"><path d="M5 15V4h12v11M1 13h5" fill="none" stroke="#2c7fbe" stroke-width="3.500"/><path d="M1.500 15v-4" stroke="#333" stroke-width="2"/><path d="M8 1v5M14 1v5" stroke="#4a4f5a"/><path d="M11 7l8 8M19 7l-8 8" stroke="#d02a2a" stroke-width="2.500"/></svg></button>
      <button aria-label="显示裁剪区域"><svg width="20" height="16" viewBox="0 0 20 16"><path d="M5 15V4h9v11M1 13h5" fill="none" stroke="#2c7fbe" stroke-width="3.500"/><path d="M1.500 15v-4" stroke="#333" stroke-width="2"/><circle cx="9.500" cy="9" r="1.800" fill="#d22"/><circle cx="16" cy="5" r="3.500" fill="#dff1fc" stroke="#4c9edc" stroke-width="1.400"/><path d="M16 9v6" stroke="#888" stroke-width="2"/></svg></button>
      <button aria-label="临时隐藏/隔离"><svg width="20" height="16" viewBox="0 0 20 16" fill="#cfe6f4" stroke="#59616d" stroke-width="1.400"><path d="M1 4c3-3 4 2 5 5M12 2c4-3 7 0 7 4l-2 3" fill="none"/><ellipse cx="8.500" cy="11.500" rx="3" ry="3"/><ellipse cx="15" cy="10" rx="3" ry="3"/></svg></button>
      <button aria-label="显示约束"><svg width="20" height="16" viewBox="0 0 20 16" fill="none" stroke="#4a4f5a" stroke-width="1.300"><path d="M1 0v16M19 0v8M2 3h16M4 1 2 3l2 2M16 1l2 2-2 2"/><path d="M3 14h8" stroke-dasharray="2 1"/><path d="M13 10c0-4 5-4 5 0"/><rect x="12" y="10" width="7" height="5" fill="#4a4f5a"/></svg></button>
      <button aria-label="预览可见性"><svg width="20" height="16" viewBox="0 0 20 16"><rect x=".7" y="1.700" width="17" height="8" fill="#dfe2e6" stroke="#4a4f5a" stroke-width="1.400"/><path d="M0 12.500h12M0 15h12" stroke="#4a4f5a" stroke-width="1.300"/><circle cx="16" cy="7" r="3.500" fill="#dff1fc" stroke="#4c9edc" stroke-width="1.400"/><path d="M16 11v5" stroke="#888" stroke-width="2"/></svg></button>
      <div class="hscroll"><svg width="7" height="10" viewBox="0 0 7 10"><path d="M6 1 2 5l4 4" fill="none" stroke="#505050" stroke-width="2"/></svg><i></i><svg width="7" height="10" viewBox="0 0 7 10"><path d="M1 1l4 4-4 4" fill="none" stroke="#505050" stroke-width="2"/></svg></div>
    </div>
    <div class="grip"><svg width="12" height="12" viewBox="0 0 12 12" fill="#bdbdbd"><path d="M8 0h3v3H8zM4 4h3v3H4zM8 4h3v3H8zM0 8h3v3H0zM4 8h3v3H4zM8 8h3v3H8z"/></svg></div>
  </section>

  <aside class="props">
    <div class="dock-title"><span>属性</span><button aria-label="关闭"><svg width="10" height="10"><use href="#x"/></svg></button></div>
    <div class="props-box">
      <div class="type">
        <div class="thumb"><svg width="74" height="74" viewBox="0 0 74 74"><path d="M0 0h74v50L40 42H0z" fill="#e9e9e9"/><path d="M18 4h16c14 0 20 6 20 15 0 7-4 12-10 14l18 24-14-3-12-20-4 3v20h-14z" fill="#a3a3a3"/><path d="M18 4l6 3v48l-6 3z" fill="#868686"/><path d="M24 34l8-3 5 3-5 5v19l-8-2z" fill="#8f8f8f"/><ellipse cx="36" cy="20" rx="6" ry="7" fill="#ececec"/></svg></div>
        <svg width="9" height="5" class="tc"><use href="#caret"/></svg>
      </div>
      <div class="filter">
        <label class="combo"><select aria-label="族类型"><option>族: 结构柱</option></select><svg width="10" height="6" viewBox="0 0 10 6"><path d="M1 1l4 4 4-4" fill="none" stroke="#444" stroke-width="1.300"/></svg></label>
        <button class="edit" disabled><svg width="17" height="17" viewBox="0 0 17 17" fill="none" stroke="#a0a0a0" stroke-width="1.300"><path d="M1 3l2-2h4v6H1zM10 3l2-2h3v5M1 9h6v6H2l-1-1z"/><rect x="9" y="7" width="7" height="9"/><path d="M11 10h3M11 13h3"/></svg>编辑类型</button>
      </div>
      <table class="grid">
        <colgroup><col class="k"><col></colgroup>
        <tbody>
          <tr class="grp"><th colspan="2"><span>约束<svg width="6" height="9"><use href="#chev"/></svg></span></th></tr>
          <tr class="ro"><td>主体</td><td></td></tr>
          <tr class="grp"><th colspan="2"><span>结构<svg width="6" height="9"><use href="#chev"/></svg></span></th></tr>
          <tr><td>横断面形状</td><td class="focus">未定义</td></tr>
          <tr><td>用于模型行为的...</td><td>其他</td></tr>
          <tr><td><label for="c1">始终导出为几何...</label></td><td><input id="c1" type="checkbox"></td></tr>
          <tr><td>平面中的梁缩进</td><td>从边界框</td></tr>
          <tr class="grp"><th colspan="2"><span>标识数据<svg width="6" height="9"><use href="#chev"/></svg></span></th></tr>
          <tr><td>代码名称</td><td></td></tr>
          <tr><td>OmniClass 编号</td><td>23.25.30.11.1...</td></tr>
          <tr class="ro"><td>OmniClass 标题</td><td>Columns</td></tr>
          <tr class="grp"><th colspan="2"><span>其他<svg width="6" height="9"><use href="#chev"/></svg></span></th></tr>
          <tr><td><label for="c2">加载时剪切的空心</label></td><td><input id="c2" type="checkbox"></td></tr>
          <tr><td>符号表示法</td><td>从族</td></tr>
          <tr><td><label for="c3">共享</label></td><td><input id="c3" type="checkbox"></td></tr>
          <tr><td><label for="c4">在平面视图中显...</label></td><td><input id="c4" type="checkbox" checked></td></tr>
        </tbody>
      </table>
      <div class="foot"><a href="#">属性帮助</a><button disabled>应用</button></div>
    </div>
  </aside>
</main>

<footer class="status">
  <p>单击可进行选择; 按 Tab 键并单击可选择其他项目; 按 Ctrl 键并单击可将新项目添加到选择集; 按 Shift 键并单击可</p>
  <div class="tools">
    <button aria-label="选择链接"><svg width="20" height="20" viewBox="0 0 20 20"><use href="#chain" width="20" height="12"/><svg x="7" y="4" width="10" height="15"><use href="#cursor"/></svg></svg></button>
    <button aria-label="选择基线图元"><svg width="20" height="20" viewBox="0 0 20 20"><path d="M11 2 1 11h10M1 15h11" fill="#cfe8f8" stroke="#2c7fbe" stroke-width="1.600"/><svg x="10" y="0" width="10" height="10"><use href="#redx"/></svg><svg x="10" y="5" width="10" height="15"><use href="#cursor"/></svg></svg></button>
    <button aria-label="选择锁定图元"><svg width="20" height="20" viewBox="0 0 20 20"><path d="M1 1h11v3H1zM3 4h7v5H3zM0 9h12v4H0z" fill="#f0934a" stroke="#b4501c"/><path d="M6 13v6" stroke="#555" stroke-width="1.500"/><svg x="10" y="0" width="10" height="10"><use href="#redx"/></svg><svg x="10" y="5" width="10" height="15"><use href="#cursor"/></svg></svg></button>
    <button aria-label="按面选择"><svg width="20" height="20" viewBox="0 0 20 20"><path d="M1 3l10-2v14L1 18z" fill="url(#sky)" stroke="#2c7fbe" stroke-width="1.300"/><svg x="10" y="0" width="10" height="10"><use href="#redx"/></svg><svg x="10" y="5" width="10" height="15"><use href="#cursor"/></svg></svg></button>
    <button aria-label="选择时拖曳"><svg width="20" height="20" viewBox="0 0 20 20"><path d="M0 6h12M6 0v12M4 2l2-2 2 2M4 10l2 2 2-2M2 4 0 6l2 2M10 4l2 2-2 2" fill="none" stroke="#222" stroke-width="1.200"/><svg x="10" y="5" width="10" height="15"><use href="#cursor"/></svg></svg></button>
    <button aria-label="后台进程"><svg width="20" height="20" viewBox="0 0 20 20"><circle cx="10" cy="10" r="6.500" fill="none" stroke="#a2a2a2" stroke-width="3.500" stroke-dasharray="4 1"/></svg></button>
    <button class="count"><svg width="22" height="18" viewBox="0 0 22 18"><path d="M1 1h20l-7 8v6l-5 2V9z" fill="#7b828d" stroke="#4a505a"/></svg>:0</button>
    <span class="mark">CSDN @邱榆超</span>
  </div>
</footer>

<svg class="notes" aria-hidden="true" fill="#ff2010"><path d="M333 21l17 6-5 4 66 79-1 1-70-75-4 4z"/><path d="M106 382l17 8-5 2 72 102-1 1-79-98-3 4z"/></svg>
</body>
</html>
```
FILE: styles.css
```css
* { box-sizing: border-box; }
html, body { margin: 0; }
body {
  display: flex;
  flex-direction: column;
  height: 100vh;
  overflow: hidden;
  background: #f5f5f5;
  color: #2b2b2b;
  font: 15px/22px "Noto Sans", "Noto Sans CJK SC", sans-serif;
}
button { padding: 0; border: 0; background: none; color: inherit; font: inherit; display: flex; align-items: center; justify-content: center; }
svg { flex: none; display: block; }
.defs { position: absolute; }

/* title bar */
.top { background: #d3d3d3; }
.title-row { display: flex; align-items: flex-start; height: 35px; }
.qat { display: flex; align-items: center; height: 26px; }
.logo { width: 34px; padding-right: 2px; }
.q { width: 30px; height: 26px; }
.c { width: 15px; height: 26px; color: #3b3b3b; }
.c.dim { color: #777; }
.sep { width: 1px; height: 27px; margin: 0 4px; background: #bcbcbc; }
.sep.wide { margin: 0 8px 0 7px; height: 22px; }
.title { display: flex; gap: 20px; margin: 3px 0 0 176px; font-size: 16px; font-weight: 400; line-height: 22px; white-space: nowrap; }
.info { display: flex; align-items: center; height: 26px; margin-left: auto; }
.tri { margin-right: 6px; }
.search { width: 225px; height: 27px; padding: 0 4px 3px; border: 1px solid #000; border-top: 0; background: #fff; font: italic 14px/20px "Noto Sans", "Noto Sans CJK SC", sans-serif; outline: 0; }
.search::placeholder { color: #777; opacity: 1; }
.login { width: 103px; justify-content: flex-start; padding-left: 1px; }
.win { display: flex; margin-left: 22px; }

.tabs { display: flex; align-items: stretch; height: 24px; }
.tab { padding: 0 12px; color: #2b2b2b; text-decoration: none; line-height: 22px; white-space: nowrap; }
.tab.addin { padding: 0 13px; }
.tab.file { padding: 0 2px 0 0; color: #fff; }
.tab.active { padding: 0 11px; margin-left: 3px; background: #f5f5f5; }
.collapse { gap: 8px; margin-left: 28px; color: #000; }

/* ribbon */
.ribbon { display: flex; padding-top: 1px; height: 150px; flex: none; }
.panel { display: flex; flex-direction: column; height: 118px; border-right: 1px solid #d9d9d9; }
.panel.last { border-right: 0; }
.body { display: flex; height: 96px; }
.cap { display: flex; align-items: center; justify-content: center; height: 22px; white-space: nowrap; }
.p-select .cap { gap: 8px; }
.modify { flex-direction: column; gap: 10px; width: 47px; height: 89px; margin: 3px 7px 0; padding-bottom: 12px; border: 1px solid #0a63b8; background: linear-gradient(#c4dcf4, #aacff2); }
.big { display: grid; grid-template-columns: 47px; grid-auto-rows: 41px; gap: 4px 2px; padding: 4px 2px 0 2px; align-content: start; }
.big.two { grid-template-columns: 47px 47px; padding: 4px 3px 0; }
.big.four { grid-template-columns: repeat(4, 47px); padding-left: 1px; }
.big.pair { grid-template-columns: 47px 16px; gap: 4px 1px; }
.big .c { width: 16px; height: 41px; }
.on { border: 1px solid #0a63b8; background: #b5d5f4; }
.small { display: grid; grid-auto-rows: 31px; padding-top: 1px; align-content: start; }
.small.one { grid-template-columns: 30px; margin-right: 4px; }
.small.three { grid-template-columns: repeat(3, 31px); padding-left: 2px; padding-right: 5px; }
.clip { padding-left: 1px; }
.paste { flex-direction: column; justify-content: flex-start; width: 60px; padding: 5px 0 0 2px; color: #a3a3a3; gap: 5px; }
.paste .gc { color: #777; }
.geo { flex-direction: column; padding: 18px 5px 0 7px; }
.row { display: flex; align-items: center; height: 30px; }
.row button { gap: 7px; height: 30px; }
.row .c { width: 16px; margin: 0 8px 0 6px; }
.row .c:last-child { width: 16px; margin: 0 0 0 5px; }
.load { flex-direction: column; justify-content: flex-start; width: 54px; padding: 5px 0 0; line-height: 20px; }
.load svg { margin-bottom: 7px; }
.load.wide { width: 80px; }
.create { padding-left: 2px; }
.editor { margin-left: 4px; }
.editor .cap { width: 136px; background: #c6c7e3; }

/* work area */
.work { display: flex; flex: 1; min-height: 0; background: #f0f0f0; color: #000; }
.dock-title { display: flex; align-items: center; justify-content: space-between; height: 27px; padding: 0 5px 0 3px; background: #bfcddb; font-size: 14px; flex: none; }
.browser { display: flex; flex-direction: column; width: 274px; padding-bottom: 1px; }
.tree { flex: 1; margin: 2px 1px 0 0; padding: 0; list-style: none; background: #fff; border: 1px solid #e3e3e3; border-top: 2px solid #6d6d6d; border-left-color: #6d6d6d; }
.tree li { display: flex; align-items: center; height: 22px; white-space: nowrap; }
.g { display: grid; width: 26px; height: 22px; align-items: center; }
.g > * { grid-area: 1 / 1; }
.g > svg { width: 26px; height: 22px; overflow: visible; stroke: #999; stroke-dasharray: 1 1; fill: none; }
.g button { width: 13px; height: 13px; margin-left: 4px; z-index: 1; }
.g button svg { width: 13px; height: 13px; }
.ti { width: 20px; height: 20px; margin-right: 3px; z-index: 1; }
.t { padding: 0 3px; z-index: 1; }
.t.in { margin-left: 3px; }
.t.cur { background: #e1e1e1; font-weight: 700; }

.view { display: grid; flex: 1; min-width: 0; grid-template-columns: 1fr 20px; grid-template-rows: 1fr 22px; margin: 0 6px 2px 4px; border-top: 2px solid #6d6d6d; border-left: 2px solid #6d6d6d; }
.canvas { display: grid; min-width: 0; min-height: 0; background: #fff; overflow: hidden; }
.canvas > * { grid-area: 1 / 1; }
.drawing { width: 100%; height: 100%; }
.level text { fill: #000; stroke: none; font: 12px "Noto Sans", "Noto Sans CJK SC", sans-serif; }
.overlay { justify-self: end; display: flex; flex-direction: column; align-items: flex-end; }
.mdi { display: flex; gap: 6px; padding: 8px 5px 8px 0; }
.navbar { width: 37px; height: 118px; border: 2px solid #c0c0c0; border-radius: 6px; background: #f8f8f8; display: flex; align-items: flex-start; }
.nav2d { font: 700 10px "Noto Sans", sans-serif; fill: #6d9cc4; }
.vscroll { display: flex; flex-direction: column; align-items: center; padding: 7px 1px 8px 0; }
.vscroll i { width: 19px; height: 21px; margin: 358px 0 auto; background: #cdcdcd; }
.viewbar { display: flex; min-width: 0; }
.viewbar button { width: 28px; }
.viewbar .scale { width: 102px; padding-left: 9px; font: 13px "Liberation Mono", monospace; white-space: pre; }
.hscroll { flex: 1; display: flex; align-items: center; padding: 0 8px 0 6px; }
.hscroll i { width: 21px; height: 20px; margin: 0 auto 0 497px; background: #cdcdcd; }
.grip { display: flex; align-items: flex-end; padding: 0 0 4px 5px; }

.props { display: flex; flex-direction: column; width: 274px; }
.props-box { display: flex; flex-direction: column; flex: 1; margin-top: 2px; background: #fff; border-top: 2px solid #6d6d6d; border-left: 2px solid #6d6d6d; }
.type { display: flex; align-items: center; justify-content: space-between; height: 88px; padding: 0 4px; background: linear-gradient(#f8f8f8, #ebebeb); border: 1px solid #dcdcdc; }
.thumb { display: flex; align-items: center; justify-content: center; width: 82px; height: 82px; border: 1px solid #dcdcdc; background: #f1f1f1; }
.tc { color: #888; }
.filter { display: flex; align-items: center; height: 31px; padding: 2px 1px; background: #f0f0f0; }
.combo { display: grid; width: 175px; align-items: center; }
.combo > * { grid-area: 1 / 1; }
.combo svg { justify-self: end; margin-right: 5px; pointer-events: none; }
.combo select { appearance: none; width: 100%; height: 27px; padding: 0 3px; border: 1px solid #adadad; border-radius: 0; background: #e1e1e1; color: #000; font: inherit; }
.edit { gap: 4px; margin-left: 5px; padding-bottom: 3px; color: #a0a0a0; white-space: nowrap; }
.grid { width: 100%; table-layout: fixed; border-collapse: separate; border-spacing: 0; }
.grid .k { width: 137px; }
.grid td, .grid th { height: 24px; padding: 0; line-height: 22px; text-align: left; white-space: nowrap; overflow: hidden; font-weight: 400; }
.grid td { padding: 0 0 2px 2px; line-height: 20px; border-bottom: 1px dotted #777; border-right: 1px dotted #777; }
.grid td:first-child { padding-left: 10px; }
.grid .ro { color: #787878; }
.grid th { background: #dbdbdb; }
.grid th span { display: flex; justify-content: space-between; padding: 0 7px 0 2px; }
.grid th svg { margin-top: 4px; }
.grid td.focus { border: 1px solid #000; padding-left: 1px; }
.grid input { appearance: none; display: block; width: 16px; height: 16px; margin: 0 0 0 1px; border: 1px solid #333; background: #fff; }
.grid input:checked::before { content: ""; display: block; width: 10px; height: 5px; margin: 3px 0 0 2px; border: solid #222; border-width: 0 0 1px 1px; transform: rotate(-45deg); }
.foot { display: flex; justify-content: space-between; align-items: flex-start; height: 31px; margin-top: auto; padding: 2px 3px 0 2px; background: #f0f0f0; }
.foot a { color: #0066cc; line-height: 20px; }
.foot button { width: 98px; height: 24px; border: 1px solid #bfbfbf; background: #ccc; color: #838383; }

/* status bar */
.status { display: flex; align-items: center; justify-content: space-between; height: 28px; flex: none; border-top: 1px solid #8c8c8c; background: linear-gradient(#cbcbcb, #d6d6d6 8px); color: #000; }
.status p { margin: 0; padding-left: 1px; white-space: nowrap; }
.tools { display: flex; align-items: center; }
.tools button { width: 30px; height: 26px; }
.tools .count { width: 40px; justify-content: flex-start; gap: 2px; }
.mark { margin: -8px 14px 0 -49px; color: #f0f0f0cc; font: 14px/20px "Liberation Sans", "Noto Sans CJK SC", sans-serif; text-shadow: 1px 1px 1px #777; white-space: nowrap; }

.notes { position: fixed; inset: 0; width: 100%; height: 100%; pointer-events: none; z-index: 5; }
```
